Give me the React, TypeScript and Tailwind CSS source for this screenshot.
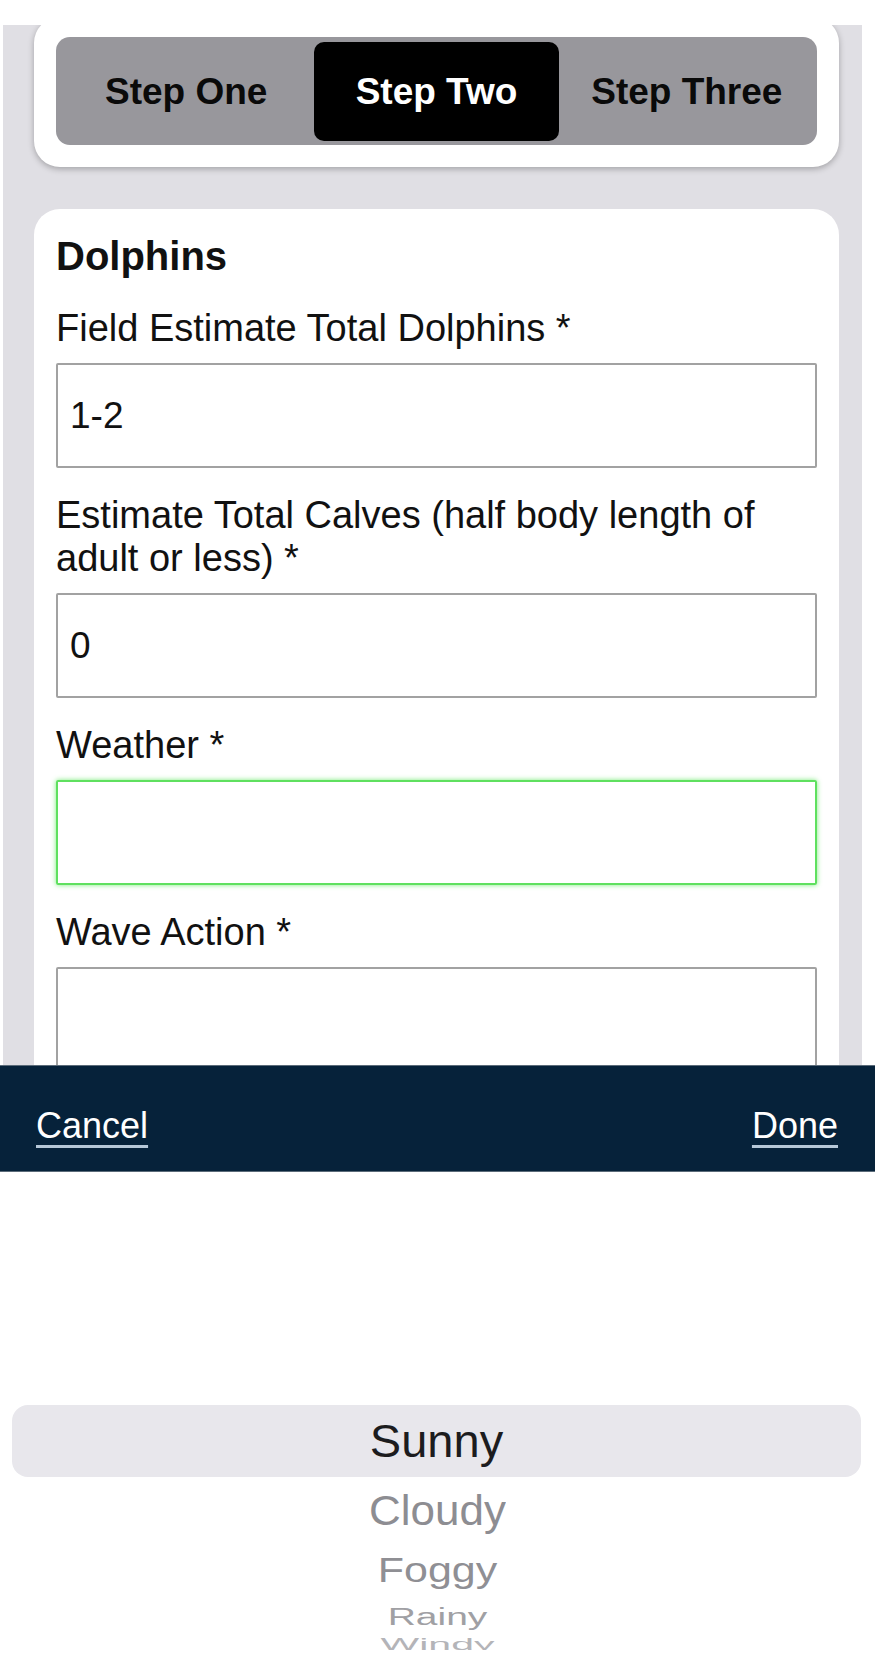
import React from "react";

const steps = ["Step One", "Step Two", "Step Three"];

interface FieldProps {
  label: string;
  value?: string;
  focused?: boolean;
}

function Field({ label, value, focused }: FieldProps) {
  return (
    <div className="mt-[26px] first:mt-[24px]">
      <div className="text-[38px] leading-[43px] text-[#111]">{label}</div>
      <div
        className={`mt-[13px] h-[105px] rounded-[2px] flex items-center px-[12px] text-[37px] text-[#111] ${
          focused
            ? "border-2 border-[#5fe05f] shadow-[0_0_5px_rgba(90,230,90,0.8)]"
            : "border-2 border-[#a2a2a2]"
        }`}
      >
        {value}
      </div>
    </div>
  );
}

export default function App() {
  return (
    <div className="w-[875px] h-[1666px] bg-white flex flex-col overflow-hidden font-['Liberation_Sans',Arial,sans-serif]">
      {/* top spacer */}
      <div className="h-[25px] shrink-0" />

      {/* Scrolled form */}
      <div className="h-[1040px] shrink-0 ml-[3px] mr-[13px] bg-[#e0dfe4] pl-[31px] pr-[23px] overflow-hidden flex flex-col">
        <div className="-mt-[8px] bg-white rounded-[26px] px-[22px] pt-[20px] pb-[22px] shadow-[0_2px_6px_rgba(0,0,0,0.28)]">
          <div className="grid grid-cols-3 bg-[#98979c] rounded-[14px] p-[5px] pb-[4px] h-[108px]">
            {steps.map((s, i) => (
              <div
                key={s}
                className={`flex items-center justify-center mx-[3px] rounded-[10px] text-[37px] font-bold ${
                  i === 1 ? "bg-black text-white" : "text-[#0a0a0a]"
                }`}
              >
                {s}
              </div>
            ))}
          </div>
        </div>

        <div className="mt-[42px] bg-white rounded-[26px] px-[22px] pt-[22px] h-[900px] shrink-0">
          <h2 className="text-[40px] leading-[50px] font-bold text-[#111]">Dolphins</h2>
          <Field label="Field Estimate Total Dolphins *" value="1-2" />
          <Field label="Estimate Total Calves (half body length of adult or less) *" value="0" />
          <Field label="Weather *" focused />
          <Field label="Wave Action *" />
        </div>
      </div>

      {/* Picker toolbar */}
      <div className="h-[107px] shrink-0 bg-[#06223a] border-y border-[#5b6b79] flex items-center justify-between pl-[36px] pr-[37px] pt-[15px] text-[36px] text-white">
        <span className="underline decoration-[#b6c8d8] decoration-[3px] underline-offset-[7px]">Cancel</span>
        <span className="underline decoration-[#b6c8d8] decoration-[3px] underline-offset-[7px]">Done</span>
      </div>

      {/* Wheel picker */}
      <div className="flex-1 flex flex-col pt-[233px]">
        <div className="ml-[12px] mr-[14px] h-[72px] rounded-[16px] bg-[#e8e7ec] flex items-center justify-center text-[47px] text-[#1c1c1e]">
          Sunny
        </div>
        <div className="h-[68px] flex items-center justify-center">
          <span className="text-[44px] leading-none text-[#8d8d92] scale-y-[0.95]">Cloudy</span>
        </div>
        <div className="h-[50px] flex items-center justify-center">
          <span className="text-[43px] leading-none text-[#8f8f94] scale-y-[0.82]">Foggy</span>
        </div>
        <div className="h-[42px] flex items-center justify-center">
          <span className="text-[39px] leading-none text-[#a0a0a4] scale-y-[0.62]">Rainy</span>
        </div>
        <div className="h-[13px] overflow-hidden flex justify-center">
          <span className="text-[41px] leading-none text-[#b4b4b8] scale-y-[0.4] origin-top -mt-[1px]">Windy</span>
        </div>
      </div>
    </div>
  );
}
